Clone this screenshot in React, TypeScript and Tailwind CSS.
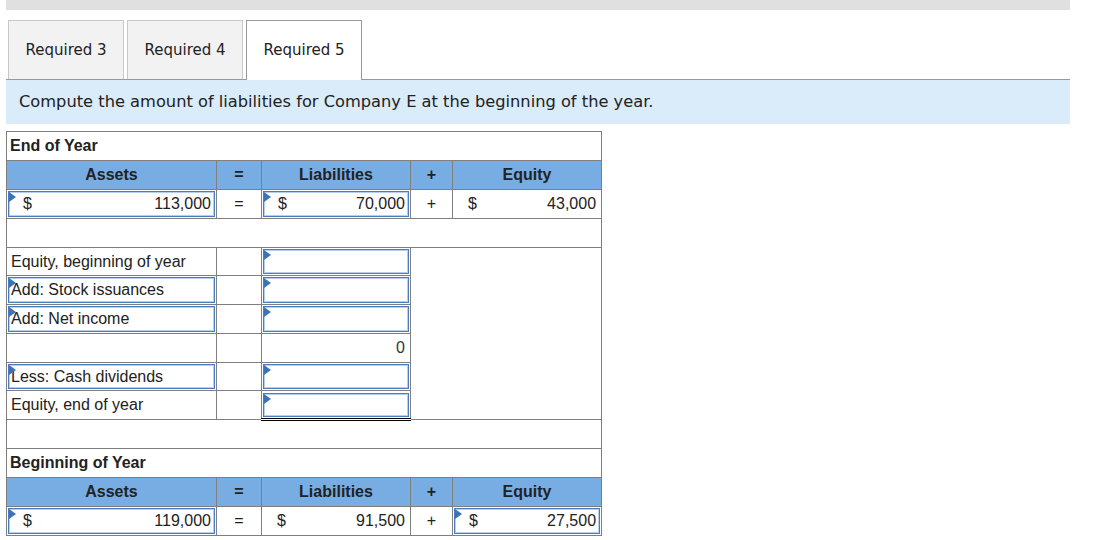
import React from 'react';

const cellBorder = 'border border-[#7f7f7f]';

function Flag() {
    return <span className="absolute left-0 top-0 w-0 h-0 border-t-[5px] border-b-[5px] border-l-[7px] border-t-transparent border-b-transparent border-l-[#3b73b9]"></span>
}

function InputBox({ children, flag = true, h = 'h-[26px]' }: { children?: React.ReactNode; flag?: boolean; h?: string }) {
    return (
        <div className={`relative ${h} border border-[#4a7cc0] shadow-[inset_0_0_0_1px_#b7cfee] flex items-center`}>
            {flag && <Flag />}
            {children}
        </div>
    )
}

function Money({ value, flag, boxed }: { value: string; flag?: boolean; boxed?: boolean }) {
    const inner = (
        <div className={`flex w-full items-center justify-between pl-[14px] ${boxed ? 'pr-[3px]' : 'pr-[4px]'}`}>
            <span>$</span>
            <span>{value}</span>
        </div>
    )
    if (boxed) return <InputBox flag={flag}>{inner}</InputBox>
    return <div className="h-[26px] flex items-center">{inner}</div>
}

function Header() {
    return (
        <tr className="h-[29px] bg-[#78ade4] font-bold text-[#222]">
            <td className={`${cellBorder} text-center`}>Assets</td>
            <td className={`${cellBorder} text-center`}>=</td>
            <td className={`${cellBorder} text-center`}>Liabilities</td>
            <td className={`${cellBorder} text-center`}>+</td>
            <td className={`${cellBorder} text-center`}>Equity</td>
        </tr>
    )
}

function EquationRow({ a, l, e, boxA, boxL, boxE }: { a: string; l: string; e: string; boxA?: boolean; boxL?: boolean; boxE?: boolean }) {
    return (
        <tr className="h-[29px]">
            <td className={`${cellBorder} p-[1px]`}><Money value={a} boxed={boxA} flag={boxA} /></td>
            <td className={`${cellBorder} text-center`}>=</td>
            <td className={`${cellBorder} p-[1px]`}><Money value={l} boxed={boxL} flag={boxL} /></td>
            <td className={`${cellBorder} text-center`}>+</td>
            <td className={`${cellBorder} p-[1px]`}><Money value={e} boxed={boxE} flag={boxE} /></td>
        </tr>
    )
}

function BlankRow() {
    return (
        <tr className="h-[29px]">
            <td colSpan={5} className={cellBorder}></td>
        </tr>
    )
}

function TitleRow({ title }: { title: string }) {
    return (
        <tr className="h-[29px]">
            <td colSpan={5} className={`${cellBorder} px-[3px] font-bold text-[#222]`}>{title}</td>
        </tr>
    )
}

function LineRow({ label, boxedLabel, amount, amountClass = '', boxedAmount = true, h = 'h-[26px]', amountH }: { label?: string; boxedLabel?: boolean; amount?: string; amountClass?: string; boxedAmount?: boolean; h?: string; amountH?: string }) {
    return (
        <tr>
            <td className={`${cellBorder} p-[1px]`}>
                {boxedLabel ? (
                    <InputBox h={h}><span className="pl-[2px]">{label}</span></InputBox>
                ) : (
                    <div className={`${h} flex items-center pl-[3px]`}>{label}</div>
                )}
            </td>
            <td className={cellBorder}></td>
            <td className={`${cellBorder} p-[1px] ${amountClass}`}>
                {boxedAmount ? (
                    <InputBox h={amountH ?? h} />
                ) : (
                    <div className={`${h} flex items-center justify-end pr-[4px] text-[#333]`}>{amount}</div>
                )}
            </td>
            <td colSpan={2} className="border-r border-[#7f7f7f]"></td>
        </tr>
    )
}

export default function App() {
    return (
        <div className="w-[1098px] h-[540px] bg-white px-[6px] overflow-hidden">
            <div className="w-[1064px] h-[10px] bg-[#e0e0e0]"></div>

            <div className="w-[1064px] mt-[10px] flex items-end gap-[3px] pl-[2px] border-b border-[#999] h-[60px]" style={{ fontFamily: '"DejaVu Sans", Verdana, sans-serif' }}>
                <div className="w-[116px] h-[59px] flex items-center justify-center bg-[#f2f2f2] border border-b-0 border-[#c8c8c8] text-[15px] text-[#222]">Required 3</div>
                <div className="w-[116px] h-[59px] flex items-center justify-center bg-[#f2f2f2] border border-b-0 border-[#c8c8c8] text-[15px] text-[#222]">Required 4</div>
                <div className="w-[116px] h-[60px] -mb-px flex items-center justify-center bg-white border border-b-0 border-[#999] text-[15px] text-[#222]">Required 5</div>
            </div>

            <div className="w-[1064px] h-[44px] bg-[#daebf9] flex items-center pl-[13px] text-[16.25px] text-[#222]" style={{ fontFamily: '"DejaVu Sans", Verdana, sans-serif' }}>
                Compute the amount of liabilities for Company E at the beginning of the year.
            </div>

            <table className="mt-[7px] w-[595px] table-fixed border-collapse text-[16px] text-[#222]" style={{ fontFamily: '"Liberation Sans", Arial, sans-serif' }}>
                <colgroup>
                    <col className="w-[210px]" />
                    <col className="w-[45px]" />
                    <col className="w-[149px]" />
                    <col className="w-[42px]" />
                    <col className="w-[149px]" />
                </colgroup>
                <tbody>
                    <TitleRow title="End of Year" />
                    <Header />
                    <EquationRow a="113,000" l="70,000" e="43,000" boxA boxL />
                    <BlankRow />
                    <LineRow label="Equity, beginning of year" h="h-[25px]" />
                    <LineRow label="Add: Stock issuances" boxedLabel />
                    <LineRow label="Add: Net income" boxedLabel />
                    <LineRow amount="0" boxedAmount={false} amountClass="border-t-black" />
                    <LineRow label="Less: Cash dividends" boxedLabel h="h-[25px]" />
                    <LineRow label="Equity, end of year" amountH="h-[24px]" amountClass="border-b-[3px] border-b-black border-double" />
                    <BlankRow />
                    <TitleRow title="Beginning of Year" />
                    <Header />
                    <EquationRow a="119,000" l="91,500" e="27,500" boxA boxE />
                </tbody>
            </table>
        </div>
    )
}
